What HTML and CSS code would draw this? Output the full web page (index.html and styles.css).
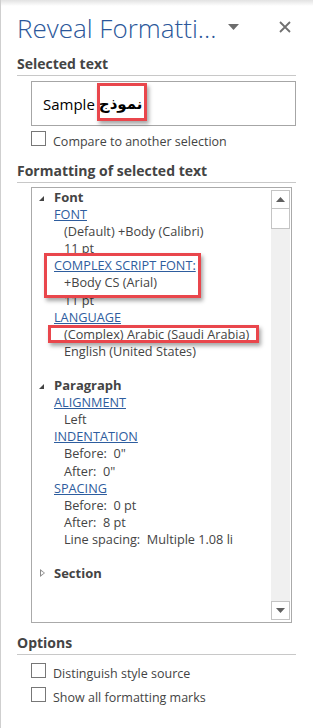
FILE: index.html
```html
<!DOCTYPE html>
<html lang="en">
<head>
  <meta charset="UTF-8">
  <title>Reveal Formatting</title>
  <link rel="stylesheet" href="styles.css">
</head>
<body>
  <div class="pane">
    <div class="pane-header">
      <h1 class="pane-title">Reveal Formatti...</h1>
      <span class="pane-menu">
        <svg width="11" height="6" viewBox="0 0 11 6"><path d="M0 0h11L5.5 6z" fill="#6d6d6d"/></svg>
      </span>
      <span class="pane-close">
        <svg width="12" height="12" viewBox="0 0 12 12"><path d="M1 1l10 10M11 1L1 11" stroke="#707070" stroke-width="1.8"/></svg>
      </span>
    </div>

    <h2 class="group-title">Selected text</h2>
    <div class="sample-box">
      <span class="sample-latin">Sample</span>
      <span class="sample-arabic" lang="ar" dir="rtl">نموذج</span>
    </div>
    <label class="check"><span class="check-box"></span><span class="check-label">Compare to another selection</span></label>

    <h2 class="group-title group-gap">Formatting of selected text</h2>
    <div class="tree-box">
      <div class="tree">
        <div class="tree-head"><span class="twisty twisty-open"></span>Font</div>
        <a class="tree-link">FONT</a>
        <div class="tree-value">(Default) +Body (Calibri)</div>
        <div class="tree-value">11 pt</div>
        <a class="tree-link">COMPLEX SCRIPT FONT:</a>
        <div class="tree-value">+Body CS (Arial)</div>
        <div class="tree-value">11 pt</div>
        <a class="tree-link">LANGUAGE</a>
        <div class="tree-value">(Complex) Arabic (Saudi Arabia)</div>
        <div class="tree-value">English (United States)</div>
        <div class="tree-blank"></div>
        <div class="tree-head"><span class="twisty twisty-open"></span>Paragraph</div>
        <a class="tree-link">ALIGNMENT</a>
        <div class="tree-value">Left</div>
        <a class="tree-link">INDENTATION</a>
        <div class="tree-value">Before:&nbsp; 0"</div>
        <div class="tree-value">After:&nbsp; 0"</div>
        <a class="tree-link">SPACING</a>
        <div class="tree-value">Before:&nbsp; 0 pt</div>
        <div class="tree-value">After:&nbsp; 8 pt</div>
        <div class="tree-value">Line spacing:&nbsp; Multiple 1.08 li</div>
        <div class="tree-blank"></div>
        <div class="tree-head"><span class="twisty twisty-closed"></span>Section</div>
      </div>
      <div class="scrollbar">
        <div class="scroll-btn">
          <svg width="9" height="5" viewBox="0 0 9 5"><path d="M0 5h9L4.5 0z" fill="#606060"/></svg>
        </div>
        <div class="scroll-thumb"></div>
        <div class="scroll-track"></div>
        <div class="scroll-btn scroll-btn-down">
          <svg width="9" height="5" viewBox="0 0 9 5"><path d="M0 0h9L4.5 5z" fill="#606060"/></svg>
        </div>
      </div>
    </div>

    <h2 class="group-title options-title">Options</h2>
    <label class="check check-first"><span class="check-box"></span><span class="check-label">Distinguish style source</span></label>
    <label class="check"><span class="check-box"></span><span class="check-label">Show all formatting marks</span></label>

    <!-- red callouts drawn over the pane -->
    <div class="mark mark-arabic"></div>
    <div class="mark mark-font"></div>
    <div class="mark mark-lang"></div>
  </div>
</body>
</html>
```

FILE: styles.css
```css
body {
  margin: 0;
  background: #fff;
  font-family: 'Segoe UI', 'Open Sans', 'DejaVu Sans', sans-serif;
  color: #444;
}
.pane {
  position: relative;
  height: 728px;
  overflow: hidden;
  background: linear-gradient(#e2e2e2, #fff 6px);
  box-shadow: inset 1px 0 0 #cfcfcf;
}
.pane-header {
  display: flex;
  align-items: flex-start;
  height: 55px;
  padding: 11px 22px 0 17px;
  box-sizing: border-box;
}
.pane-title {
  flex: 1;
  margin: 0;
  font-size: 26px;
  line-height: 34px;
  font-weight: 300;
  color: #2b579a;
  white-space: nowrap;
}
.pane-menu {
  display: flex;
  margin-top: 13px;
  margin-right: 40px;
}
.pane-close {
  display: flex;
  margin-top: 10px;
}
.group-title {
  margin: 0 17px;
  font-size: 14px;
  font-weight: 700;
  line-height: 18px;
  padding-bottom: 2px;
  border-bottom: 1px solid #c8c8c8;
  color: #444;
}
.group-gap {
  margin-top: 12px;
}
.options-title {
  margin-top: 11px;
}
.sample-box {
  display: flex;
  align-items: center;
  gap: 4px;
  height: 45px;
  margin: 5px 17px 0 31px;
  padding-left: 11px;
  border: 1px solid #a6a6a6;
  box-sizing: border-box;
  font-size: 15px;
  color: #000;
}
.sample-arabic {
  font-family: 'DejaVu Sans', sans-serif;
  font-size: 15px;
  font-weight: 700;
}
.check {
  display: flex;
  align-items: flex-start;
  gap: 7px;
  margin: 5px 0 0 31px;
  font-size: 12.5px;
  line-height: 17px;
  color: #444;
}
.check-first {
  margin-top: 8px;
}
.check-box {
  width: 15px;
  height: 15px;
  border: 1px solid #777;
  box-sizing: border-box;
  background: #fff;
}
.check-label {
  padding-top: 2px;
}
.tree-box {
  display: flex;
  height: 436px;
  margin: 4px 21px 0 31px;
  border: 1px solid #aaa;
  box-sizing: border-box;
}
.tree {
  flex: 1;
  padding: 1px 0 0 7px;
  font-size: 12.7px;
  line-height: 17.1px;
}
.tree-head {
  display: flex;
  align-items: center;
  font-size: 13px;
  font-weight: 700;
  height: 17.1px;
  color: #444;
}
.twisty {
  width: 15px;
  height: 17px;
  position: relative;
}
.twisty-open::before {
  content: '';
  position: absolute;
  left: 0;
  top: 7px;
  border-style: solid;
  border-width: 0 0 5px 5px;
  border-color: transparent transparent #444 transparent;
}
.twisty-closed::before {
  content: '';
  position: absolute;
  left: 1px;
  top: 4px;
  width: 0;
  height: 0;
  border-style: solid;
  border-width: 4.5px 0 4.5px 5px;
  border-color: transparent transparent transparent #8a8a8a;
}
.twisty-closed::after {
  content: '';
  position: absolute;
  left: 2px;
  top: 6px;
  border-style: solid;
  border-width: 2.5px 0 2.5px 3px;
  border-color: transparent transparent transparent #fff;
}
.tree-link {
  display: block;
  width: max-content;
  margin-left: 15px;
  color: #2e5d9e;
  text-decoration: underline;
  text-underline-offset: 1px;
}
.tree-value {
  padding-left: 25px;
  color: #444;
}
.tree-blank {
  height: 17.1px;
}
.scrollbar {
  display: flex;
  flex-direction: column;
  width: 19px;
  margin: 2px 1px 2px 0;
  background: #f0f0f0;
}
.scroll-btn {
  display: flex;
  align-items: center;
  justify-content: center;
  height: 19px;
  border: 1px solid #c4c4c4;
  box-sizing: border-box;
  background: #fff;
}
.scroll-thumb {
  height: 21px;
  margin-top: -1px;
  border: 1px solid #c4c4c4;
  box-sizing: border-box;
  background: #fff;
}
.scroll-track {
  flex: 1;
}
.mark {
  position: absolute;
  border: 3px solid #e9464c;
  box-sizing: border-box;
  box-shadow: 2px 3px 4px rgba(0, 0, 0, 0.35);
}
.mark-arabic {
  left: 97px;
  top: 83px;
  width: 50px;
  height: 38px;
}
.mark-font {
  left: 44px;
  top: 253px;
  width: 157px;
  height: 45px;
}
.mark-lang {
  left: 48px;
  top: 325px;
  width: 211px;
  height: 18px;
}
```
